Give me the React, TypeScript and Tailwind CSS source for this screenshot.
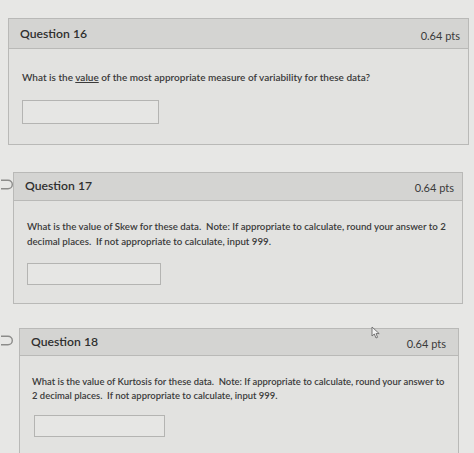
import React from "react";

type Q = {
  no: number;
  text: React.ReactNode;
  card: string;
  head: string;
  body: string;
  textSize: string;
  input: string;
  flag?: string;
};

const questions: Q[] = [
  {
    no: 16,
    text: (
      <>
        What is the <span className="underline">value</span> of the most appropriate measure of variability for these data?
      </>
    ),
    card: "ml-[8px] mr-[5px] mt-[18px]",
    head: "h-[30px] pt-[6px] pr-[8px]",
    body: "pt-[21px] pb-[20px] pl-[13px] pr-[8px]",
    textSize: "text-[10px] leading-[15px]",
    input: "mt-[15px] h-[24px] w-[137px]",
  },
  {
    no: 17,
    text: "What is the value of Skew for these data.  Note: If appropriate to calculate, round your answer to 2 decimal places.  If not appropriate to calculate, input 999.",
    card: "ml-[13px] mr-[11px] mt-[27px]",
    head: "h-[28px] pt-[4px] pr-[8px]",
    body: "pt-[18px] pb-[18px] pl-[13px] pr-[6px]",
    textSize: "text-[9.7px] leading-[15px]",
    input: "mt-[14px] h-[22px] w-[134px]",
    flag: "left-[-13px] top-[6px]",
  },
  {
    no: 18,
    text: "What is the value of Kurtosis for these data.  Note: If appropriate to calculate, round your answer to 2 decimal places.  If not appropriate to calculate, input 999.",
    card: "ml-[19px] mr-[15px] mt-[24px]",
    head: "h-[27px] pt-[4px] pr-[12px]",
    body: "pt-[19px] pb-[18px] pl-[12px] pr-[6px]",
    textSize: "text-[9.45px] leading-[14px]",
    input: "mt-[12px] ml-[2px] h-[22px] w-[131px]",
    flag: "left-[-19px] top-[6px]",
  },
];

function Flag({ pos }: { pos: string }) {
  return (
    <svg className={`absolute ${pos}`} width="13" height="11" viewBox="0 0 13 11">
      <path d="M-2 1.2 H7 A4.3 4.3 0 0 1 7 9.8 H-2" fill="none" stroke="#8c8c8a" strokeWidth="1.4" />
    </svg>
  );
}

function Card({ q }: { q: Q }) {
  return (
    <div className={`relative border border-[#b9b9b7] bg-[#e2e2e0] ${q.card}`}>
      {q.flag && <Flag pos={q.flag} />}
      <div className={`flex items-start justify-between border-b border-[#b9b9b7] bg-[#d4d4d2] pl-[11px] ${q.head}`}>
        <span className="text-[12.2px] font-semibold text-[#2f2f2f]">Question {q.no}</span>
        <span className="mt-[3px] text-[11px] text-[#3a3a3a]">0.64 pts</span>
      </div>
      <div className={q.body}>
        <p className={`whitespace-pre-wrap font-semibold text-[#3a3a3a] ${q.textSize}`}>{q.text}</p>
        <div className={`border border-[#b4b4b2] bg-[#e6e6e4] ${q.input}`} />
      </div>
    </div>
  );
}

export default function App() {
  return (
    <div
      className="relative h-[453px] w-[474px] overflow-hidden bg-[#e7e7e5]"
      style={{ fontFamily: "Lato, 'Open Sans', sans-serif" }}
    >
      {questions.map((q) => (
        <Card key={q.no} q={q} />
      ))}
      <svg className="absolute left-[371px] top-[326px]" width="10" height="13" viewBox="0 0 10 13">
        <path d="M1 1 L1 10 L3.3 8 L5 12 L6.6 11.3 L5 7.6 L8.2 7.6 Z" fill="#f2f2f2" stroke="#6a6a6a" strokeWidth="0.9" strokeLinejoin="round" />
      </svg>
    </div>
  );
}
